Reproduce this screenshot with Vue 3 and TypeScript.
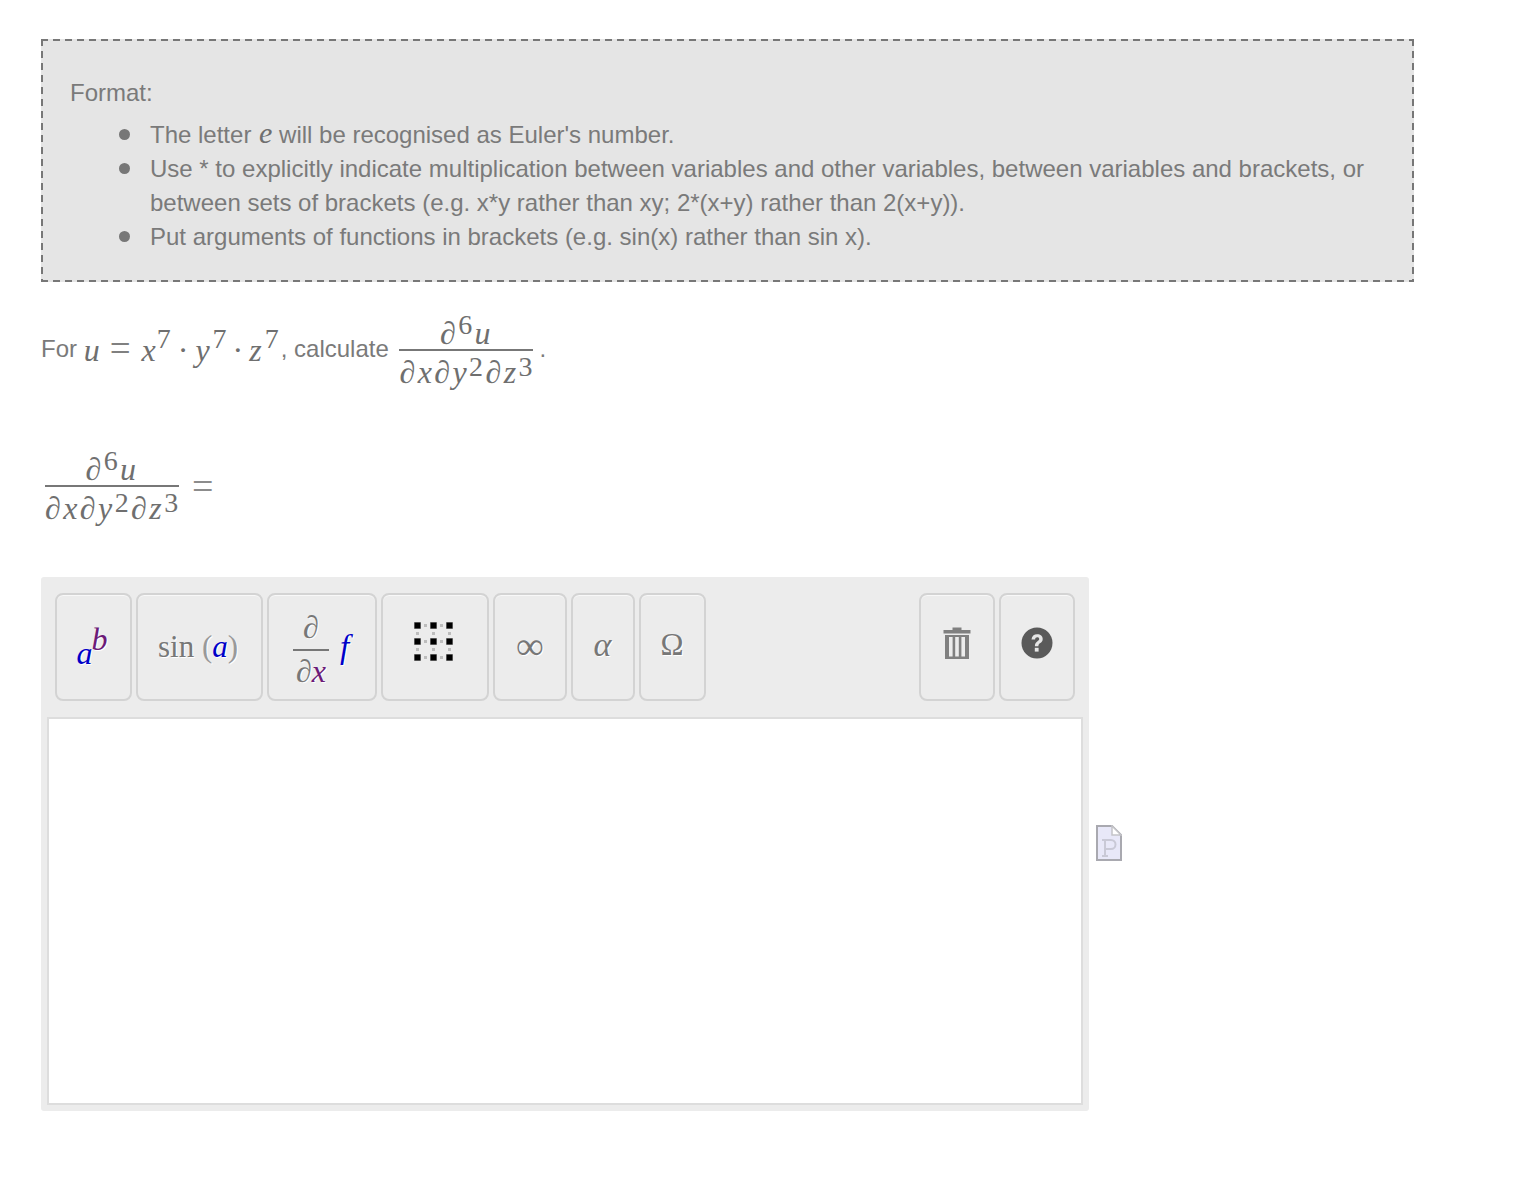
<script setup lang="ts">
const bullets = [
  "Use * to explicitly indicate multiplication between variables and other variables, between variables and brackets, or between sets of brackets (e.g. x*y rather than xy; 2*(x+y) rather than 2(x+y)).",
  "Put arguments of functions in brackets (e.g. sin(x) rather than sin x).",
];
const gridPos = [5.500, 21.500, 37.500];
const gridMid = [13.500, 29.500];
</script>

<template>
  <main class="page">
    <section class="format">
      <p class="format-title">Format:</p>
      <ul class="format-list">
        <li>The letter <i class="m e">e</i> will be recognised as Euler's number.</li>
        <li v-for="b in bullets" :key="b">{{ b }}</li>
      </ul>
    </section>

    <p class="question">
      <span class="t">For&nbsp;</span>
      <span class="m q-eq"><i>u</i><span class="op">=</span><i class="var-x">x</i><sup class="s1">7</sup><span class="dot d1">·</span><i>y</i><sup class="s2">7</sup><span class="dot d2">·</span><i>z</i><sup class="s2">7</sup></span>
      <span class="t calc">, calculate&nbsp;</span>
      <span class="frac m">
        <span class="num">∂<sup>6</sup><i>u</i></span>
        <span class="den">∂<i>x</i>∂<i>y</i><sup>2</sup>∂<i>z</i><sup>3</sup></span>
      </span>
      <span class="t period">.</span>
    </p>

    <div class="answer-label m">
      <span class="frac">
        <span class="num">∂<sup>6</sup><i>u</i></span>
        <span class="den">∂<i>x</i>∂<i>y</i><sup>2</sup>∂<i>z</i><sup>3</sup></span>
      </span>
      <span class="equals">=</span>
    </div>

    <div class="answer-row">
      <section class="editor">
        <div class="toolbar">
          <button class="tb w-77 m"><span class="ab"><i class="blue">a</i><i class="purple ab-b">b</i></span></button>
          <button class="tb w-127 m"><span class="sin">sin <span class="paren">(</span><i class="blue">a</i><span class="paren">)</span></span></button>
          <button class="tb w-110 m">
            <span class="df">
              <span class="df-frac">
                <span class="df-top">∂</span>
                <span class="df-bot">∂<i class="purple">x</i></span>
              </span>
              <i class="blue df-f">f</i>
            </span>
          </button>
          <button class="tb w-108" aria-label="matrix">
            <svg class="grid" width="44" height="44" viewBox="0 0 44 44">
              <g v-for="y in gridPos" :key="y">
                <rect v-for="x in gridPos" :key="x" :x="x - 3" :y="y - 3" width="6" height="6" fill="#000" stroke="#000" stroke-opacity="0.3" />
                <rect v-for="x in gridMid" :key="x" :x="x - 1.5" :y="y - 1.5" width="3" height="3" fill="#bdbdbd" />
              </g>
              <g v-for="y in gridMid" :key="y">
                <rect v-for="x in gridPos" :key="x" :x="x - 1.5" :y="y - 1.5" width="3" height="3" fill="#bdbdbd" />
              </g>
            </svg>
          </button>
          <button class="tb w-74 sym m"><span class="inf">∞</span></button>
          <button class="tb w-64 sym m"><i class="alpha">α</i></button>
          <button class="tb w-67 sym m"><span class="omega">Ω</span></button>
          <span class="spacer"></span>
          <button class="tb w-76" aria-label="delete">
            <svg class="trash" width="28" height="32" viewBox="0 0 28 32">
              <path d="M9.500 0.500 h9 v2.500 h9 v3.500 h-27 v-3.500 h9z" fill="#808080" />
              <path d="M2 8 h24 v24 h-24z M6 10 v19.500 h3.600 v-19.500z M12.200 10 v19.500 h3.600 v-19.500z M18.400 10 v19.500 h3.600 v-19.500z" fill="#808080" fill-rule="evenodd" />
            </svg>
          </button>
          <button class="tb w-76" aria-label="help">
            <svg class="help" width="32" height="32" viewBox="0 0 32 32">
              <circle cx="16" cy="16" r="15.500" fill="#5a5a5a" />
              <path d="M10.500 12.400c.3-3.300 2.500-5.200 5.700-5.200 3.300 0 5.500 1.900 5.500 4.700 0 2.100-1 3.200-2.700 4.400-1.200.9-1.600 1.400-1.600 2.900h-3.500c0-2.500.6-3.500 2.300-4.800 1.300-.9 2-1.600 2-2.500 0-1-.7-1.700-1.900-1.700-1.300 0-2.100.9-2.200 2.300z" fill="#e6e6e6" />
              <rect x="13.800" y="20.800" width="3.800" height="3.800" fill="#e6e6e6" />
            </svg>
          </button>
        </div>
        <div class="input"></div>
      </section>
      <svg class="doc" width="26" height="36" viewBox="0 0 26 36">
        <path d="M1 1 H16 L25 10 V35 H1z" fill="#e8e8f8" stroke="#a9a9b0" stroke-width="2" />
        <path d="M16 1 V10 H25z" fill="#fff" stroke="#c4c4c8" stroke-width="1.500" />
        <path d="M9 31 V15 H15 a4 4 0 0 1 0 9 H9 M6 31 H12 M6 15 H9" fill="none" stroke="#c9c9d6" stroke-width="2" />
      </svg>
    </div>
  </main>
</template>

<style>
html, body { margin: 0; background: #fff; }
</style>

<style scoped>
.page {
  box-sizing: border-box;
  width: 1536px;
  height: 1199px;
  padding: 39px 0 0 41px;
  font-family: "Liberation Sans", Arial, sans-serif;
  font-size: 24px;
  line-height: 34px;
  color: #7a7a7a;
  overflow: hidden;
}
.m { font-family: "Liberation Serif", "Times New Roman", serif; }
.format {
  box-sizing: border-box;
  width: 1373px;
  height: 243px;
  padding: 37px 29px 0;
  background-color: #e5e5e5;
  background-image:
    repeating-linear-gradient(90deg, #777 0 7px, transparent 7px 12px),
    repeating-linear-gradient(90deg, #777 0 7px, transparent 7px 12px),
    repeating-linear-gradient(180deg, #777 0 7px, transparent 7px 12px),
    repeating-linear-gradient(180deg, #777 0 7px, transparent 7px 12px);
  background-size: 100% 2px, 100% 2px, 2px 100%, 2px 100%;
  background-position: 0 0, 0 100%, 0 0, 100% 0;
  background-repeat: no-repeat;
}
.format-title { margin: 0 0 8px; }
.format-list { margin: 0; padding: 0 0 0 54px; width: 1240px; list-style: none; }
.format-list li { position: relative; padding-left: 26px; }
.format-list li::before {
  content: "";
  position: absolute;
  left: -5px;
  top: 11px;
  width: 11px;
  height: 11px;
  border-radius: 50%;
  background: #777;
}
.e { font-size: 30px; line-height: 0; margin: 0 0 0 1px; color: #6f6f6f; }
.question {
  display: flex;
  align-items: center;
  height: 90px;
  margin: 23px 0 0;
  white-space: pre;
}
.t { margin-bottom: 2px; }
.calc { margin-left: 2px; }
.q-eq { font-size: 32px; color: #6f6f6f; }
.var-x { margin-left: 1px; }
.op { font-size: 37px; margin: 0 10px; line-height: 0; color: #808080; }
.dot { font-size: 32px; }
.d1 { margin: 0 7px 0 7px; }
.d2 { margin: 0 6px 0 6px; }
sup { font-size: 28px; line-height: 0; vertical-align: 13px; }
.s1 { margin-left: 1px; }
.s2 { margin-left: 3px; }
.frac {
  display: inline-flex;
  flex-direction: column;
  align-items: center;
  font-size: 32px;
  line-height: 43px;
  color: #6f6f6f;
  letter-spacing: 2.400px;
  margin-left: 4px;
}
.num { border-bottom: 2px solid #777; width: 134px; text-align: center; padding-bottom: 1px; height: 36px; }
.num sup { vertical-align: 10px; }
.den { white-space: nowrap; width: 134px; height: 37px; text-align: center; }
.den sup { vertical-align: 7px; }
.period { margin-left: 6px; }
.answer-label {
  display: flex;
  align-items: center;
  height: 90px;
  margin: 46px 0 0;
  color: #6f6f6f;
}
.equals { font-size: 38px; margin-left: 13px; color: #8c8c8c; }
.answer-row { display: flex; align-items: center; margin-top: 46px; }
.editor {
  box-sizing: border-box;
  width: 1048px;
  height: 534px;
  padding: 16px 6px 6px;
  background: #ececec;
  border-radius: 3px;
}
.toolbar { display: flex; gap: 4px; padding: 0 8px; height: 108px; }
.spacer { flex: 1; }
.tb {
  box-sizing: border-box;
  display: flex;
  align-items: center;
  justify-content: center;
  height: 108px;
  padding: 0;
  background: #ececec;
  border: 2px solid #d3d3d3;
  border-radius: 8px;
  box-shadow: inset 0 1px 0 #f8f8f8;
  font-size: 30px;
  line-height: 1;
  color: #777;
  text-shadow: 1px 1px 0 #fff;
}
.w-77 { width: 77px; } .w-127 { width: 127px; } .w-110 { width: 110px; }
.w-108 { width: 108px; } .w-74 { width: 74px; } .w-64 { width: 64px; }
.w-67 { width: 67px; } .w-76 { width: 76px; }
.blue { color: #0000c8; }
.purple { color: #6c1a78; }
.ab { display: flex; align-items: flex-start; margin-right: 3px; margin-top: 2px; font-size: 32px; }
.ab .blue { margin-top: 9px; }
.ab-b { margin-top: -5px; margin-left: -1px; }
.sin { font-size: 31px; margin-top: -1px; margin-right: 3px; }
.paren { color: #999; }
.df { display: flex; align-items: center; gap: 9px; margin-left: -2px; }
.df-frac { display: flex; flex-direction: column; align-items: center; width: 36px; }
.df-top { height: 44px; line-height: 44px; border-bottom: 2px solid #777; width: 100%; text-align: center; font-size: 32px; }
.df-bot { height: 38px; line-height: 40px; font-size: 32px; }
.df-f { font-size: 33px; margin-top: 0; margin-left: 2px; }
.grid { margin-top: -10px; margin-right: 3px; }
.sym { font-size: 32px; }
.inf { font-size: 39px; margin-top: -4px; }
.alpha { font-size: 34px; margin-top: -4px; margin-right: 1px; }
.omega { font-size: 31px; margin-top: -6px; margin-right: 1px; }
.trash { margin-top: -9px; }
.help { margin-top: -8px; }
.input {
  box-sizing: border-box;
  height: 388px;
  margin-top: 16px;
  background: #fff;
  border: 2px solid #ddd;
}
.doc { margin-left: 7px; margin-top: -3px; }
</style>
